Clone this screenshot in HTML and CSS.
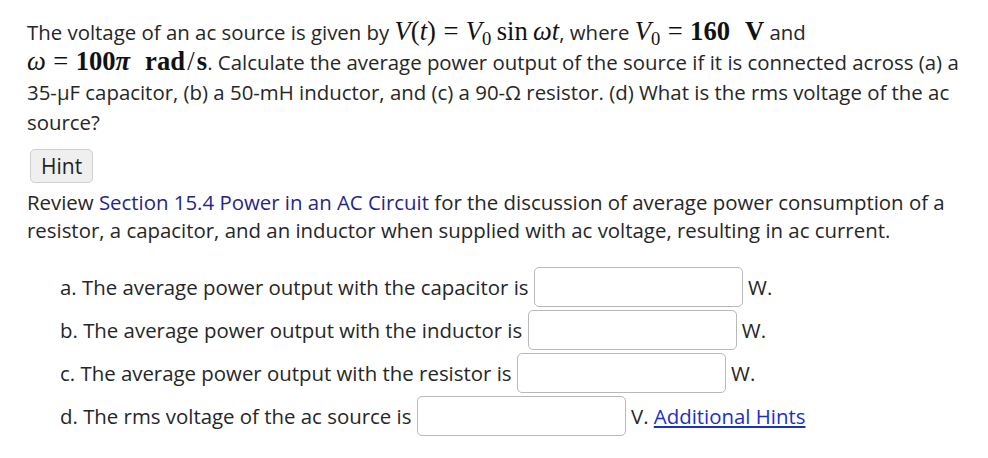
FILE: index.html
```html
<!DOCTYPE html>
<html>
<head>
<meta charset="utf-8">
<link rel="stylesheet" href="styles.css">
</head>
<body>
<div class="page">
  <p class="question">The voltage of an ac source is given by <span class="math"><i>V</i>(<i>t</i>)<span class="rel">=</span><i>V</i><sub>0</sub>&#8201;sin&#8201;<i>ωt</i></span>, where <span class="math"><i>V</i><sub>0</sub><span class="rel">=</span><b>160</b><span class="quad"></span><b>V</b></span> and <span class="math"><i>ω</i><span class="rel">=</span><b>100<i>π</i></b><span class="quad"></span><b>rad</b>&#8202;/&#8202;<b>s</b></span>. Calculate the average power output of the source if it is connected across (a) a 35-μF capacitor, (b) a 50-mH inductor, and (c) a 90-Ω resistor. (d) What is the rms voltage of the ac source?</p>
  <button class="hint">Hint</button>
  <p class="review">Review <a class="section" href="#">Section 15.4 Power in an AC Circuit</a> for the discussion of average power consumption of a resistor, a capacitor, and an inductor when supplied with ac voltage, resulting in ac current.</p>
  <div class="answers">
    <div class="row">a. The average power output with the capacitor is <input class="box" type="text"> W.</div>
    <div class="row">b. The average power output with the inductor is <input class="box" type="text"> W.</div>
    <div class="row">c. The average power output with the resistor is <input class="box" type="text"> W.</div>
    <div class="row">d. The rms voltage of the ac source is <input class="box" type="text"> V. <a class="more" href="#">Additional Hints</a></div>
  </div>
</div>
</body>
</html>
```
FILE: styles.css
```css
html, body {
  margin: 0;
  padding: 0;
  background: #ffffff;
}
.page {
  padding: 17px 0 0 27px;
  width: 948px;
  font-family: "Open Sans", "Noto Sans", sans-serif;
  font-size: 20.4px;
  line-height: 30px;
  color: #262626;
}
.question {
  margin: 0;
  line-height: 30px;
}
.math {
  font-family: "Liberation Serif", "DejaVu Serif", serif;
  font-size: 26.6px;
  line-height: 0;
  white-space: nowrap;
  color: #111;
}
.math i {
  font-style: italic;
}
.math b {
  font-weight: bold;
}
.math sub {
  font-size: 0.7em;
  vertical-align: -0.25em;
  line-height: 0;
}
.math .rel {
  padding: 0 0.28em;
}
.math .quad {
  display: inline-block;
  width: 15px;
}
.hint {
  display: block;
  margin: 12px 0 0 3px;
  padding: 0 10px;
  width: 63px;
  height: 34px;
  font-family: "Open Sans", "Noto Sans", sans-serif;
  font-size: 21px;
  line-height: 32px;
  color: #222;
  background: #efefef;
  border: 1px solid #cfcfcf;
  border-radius: 5px;
}
.review {
  margin: 5px 0 0 0;
  line-height: 28px;
}
.section {
  color: #1f2788;
  text-decoration: none;
}
.answers {
  margin: 21px 0 0 33px;
  font-size: 20.4px;
}
.row {
  height: 43px;
  display: flex;
  align-items: center;
  white-space: pre;
}
.box {
  box-sizing: border-box;
  width: 209px;
  height: 40px;
  margin: 0;
  border: 1px solid #b9b9b9;
  border-radius: 5px;
  background: #fff;
}
.more {
  color: #1a30c4;
  text-decoration: underline;
}
```
